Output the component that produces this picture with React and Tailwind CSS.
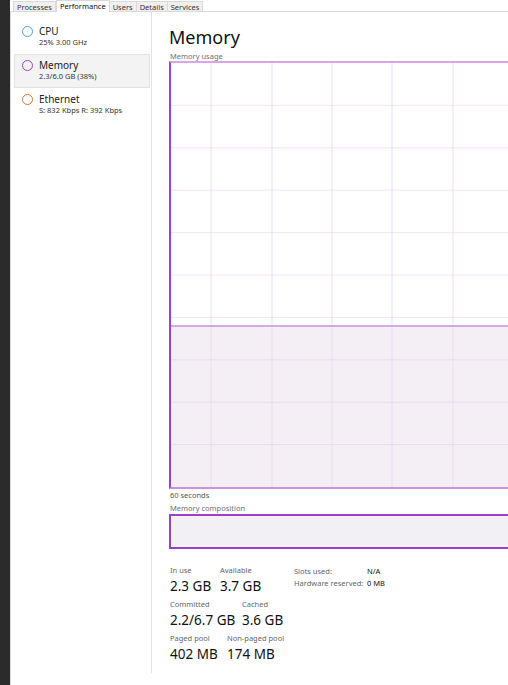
export default function App() {
  const vLines = [40, 101, 161, 221, 282];
  const hLines = [1, 2, 3, 4, 5, 6, 7, 8, 9].map((i) => i * 42.4);
  const fillTop = 263;
  return (
    <div className="w-[508px] h-[685px] overflow-hidden bg-white flex font-['Noto_Sans',sans-serif] text-[#1a1a1a]">
      <div className="w-[10px] h-full bg-[#2b2b2b] shrink-0" />
      <div className="flex-1 flex flex-col min-w-0">
        {/* Tabs */}
        <div className="h-[12px] flex items-end pl-[3px] shrink-0 relative z-10">
          {[
            ["Processes", false],
            ["Performance", true],
            ["Users", false],
            ["Details", false],
            ["Services", false],
          ].map(([t, sel]) => (
            <div
              key={t}
              className={
                sel
                  ? "h-[12px] px-[3px] bg-white border border-b-0 border-[#d9d9d9] text-[7.5px] leading-[10px] text-[#111]"
                  : "h-[11px] px-[3px] bg-[#f0f0f0] border border-[#d9d9d9] -ml-px first:ml-0 text-[7.5px] leading-[10px] text-[#333]"
              }
            >
              {t}
            </div>
          ))}
        </div>
        {/* Content pane */}
        <div className="flex-1 flex border-t border-l border-[#d9d9d9] -mt-px min-h-0">
          {/* Sidebar */}
          <div className="w-[141px] shrink-0 h-[661px] border-r border-[#e3e3e3] pt-[8px] pl-[3px] pr-[1px]">
            {[
              ["CPU", "25% 3.00 GHz", "#4a9fd8", false],
              ["Memory", "2.3/6.0 GB (38%)", "#a43fc8", true],
              ["Ethernet", "S: 832 Kbps R: 392 Kbps", "#d07a3a", false],
            ].map(([title, sub, color, sel]) => (
              <div
                key={title}
                className={
                  "h-[34px] flex items-start pl-[7px] pt-[5px] " +
                  (sel ? "bg-[#f3f3f3] border border-[#e2e2e2]" : "border border-transparent")
                }
              >
                <div
                  className="w-[11px] h-[11px] rounded-full border mt-[0px] shrink-0"
                  style={{ borderColor: color }}
                />
                <div className="ml-[6px] flex flex-col">
                  <div className="text-[10px] leading-[11px] text-[#222]">{title}</div>
                  <div className="text-[7.5px] leading-[11px] text-[#333]">{sub}</div>
                </div>
              </div>
            ))}
          </div>
          {/* Main */}
          <div className="flex-1 min-w-0 overflow-hidden pl-[17px] pt-[13px]">
            <div className="text-[18px] leading-[24px] text-[#111]">Memory</div>
            <div className="text-[7.5px] leading-[10px] text-[#707070] mt-[2px] pl-px">Memory usage</div>
            <div className="w-[360px] h-[428px] border-t-2 border-t-[#d9a5ea] border-l-2 border-l-[#a43ed0] border-b-2 border-b-[#c993dd] relative">
              <svg width="358" height="424" className="block">
                <rect x="0" y={fillTop} width="358" height={424 - fillTop} fill="#f3eff5" />
                {hLines.map((y) => (
                  <line key={y} x1="0" x2="358" y1={y} y2={y} stroke={y < fillTop ? "#f3e2f7" : "#e8dcec"} strokeWidth="1" />
                ))}
                {vLines.map((x) => (
                  <line key={x} x1={x} x2={x} y1="0" y2="424" stroke="#ecdcf1" strokeWidth="1" />
                ))}
                <line x1="0" x2="358" y1={fillTop} y2={fillTop} stroke="#c98fe0" strokeWidth="1.5" />
              </svg>
            </div>
            <div className="text-[7.5px] leading-[10px] text-[#555] mt-[1px] pl-px">60 seconds</div>
            <div className="text-[7.5px] leading-[10px] text-[#707070] mt-[3px] pl-px">Memory composition</div>
            <div className="w-[360px] h-[35px] mt-[1px] border-2 border-[#9b3fc4] bg-[#f3f0f5]" />
            <div className="flex mt-[16px] pl-[1px]">
              <div className="flex flex-col w-[124px] shrink-0">
                {[
                  [["In use", "2.3 GB", "w-[50px]"], ["Available", "3.7 GB", ""]],
                  [["Committed", "2.2/6.7 GB", "w-[72px]"], ["Cached", "3.6 GB", ""]],
                  [["Paged pool", "402 MB", "w-[57px]"], ["Non-paged pool", "174 MB", ""]],
                ].map((row, i) => (
                  <div key={i} className="flex h-[34px]">
                    {row.map(([l, v, w]) => (
                      <div key={l} className={"flex flex-col shrink-0 " + w}>
                        <div className="text-[7.5px] leading-[11px] text-[#666] whitespace-nowrap">{l}</div>
                        <div className="text-[13.5px] leading-[20px] text-[#111] whitespace-nowrap">{v}</div>
                      </div>
                    ))}
                  </div>
                ))}
              </div>
              <div className="flex flex-col">
                {[
                  ["Slots used:", "N/A"],
                  ["Hardware reserved:", "0 MB"],
                ].map(([l, v]) => (
                  <div key={l} className="flex text-[7.5px] leading-[12px]">
                    <div className="w-[73px] text-[#666]">{l}</div>
                    <div className="text-[#111]">{v}</div>
                  </div>
                ))}
              </div>
            </div>
          </div>
        </div>
      </div>
    </div>
  );
}
